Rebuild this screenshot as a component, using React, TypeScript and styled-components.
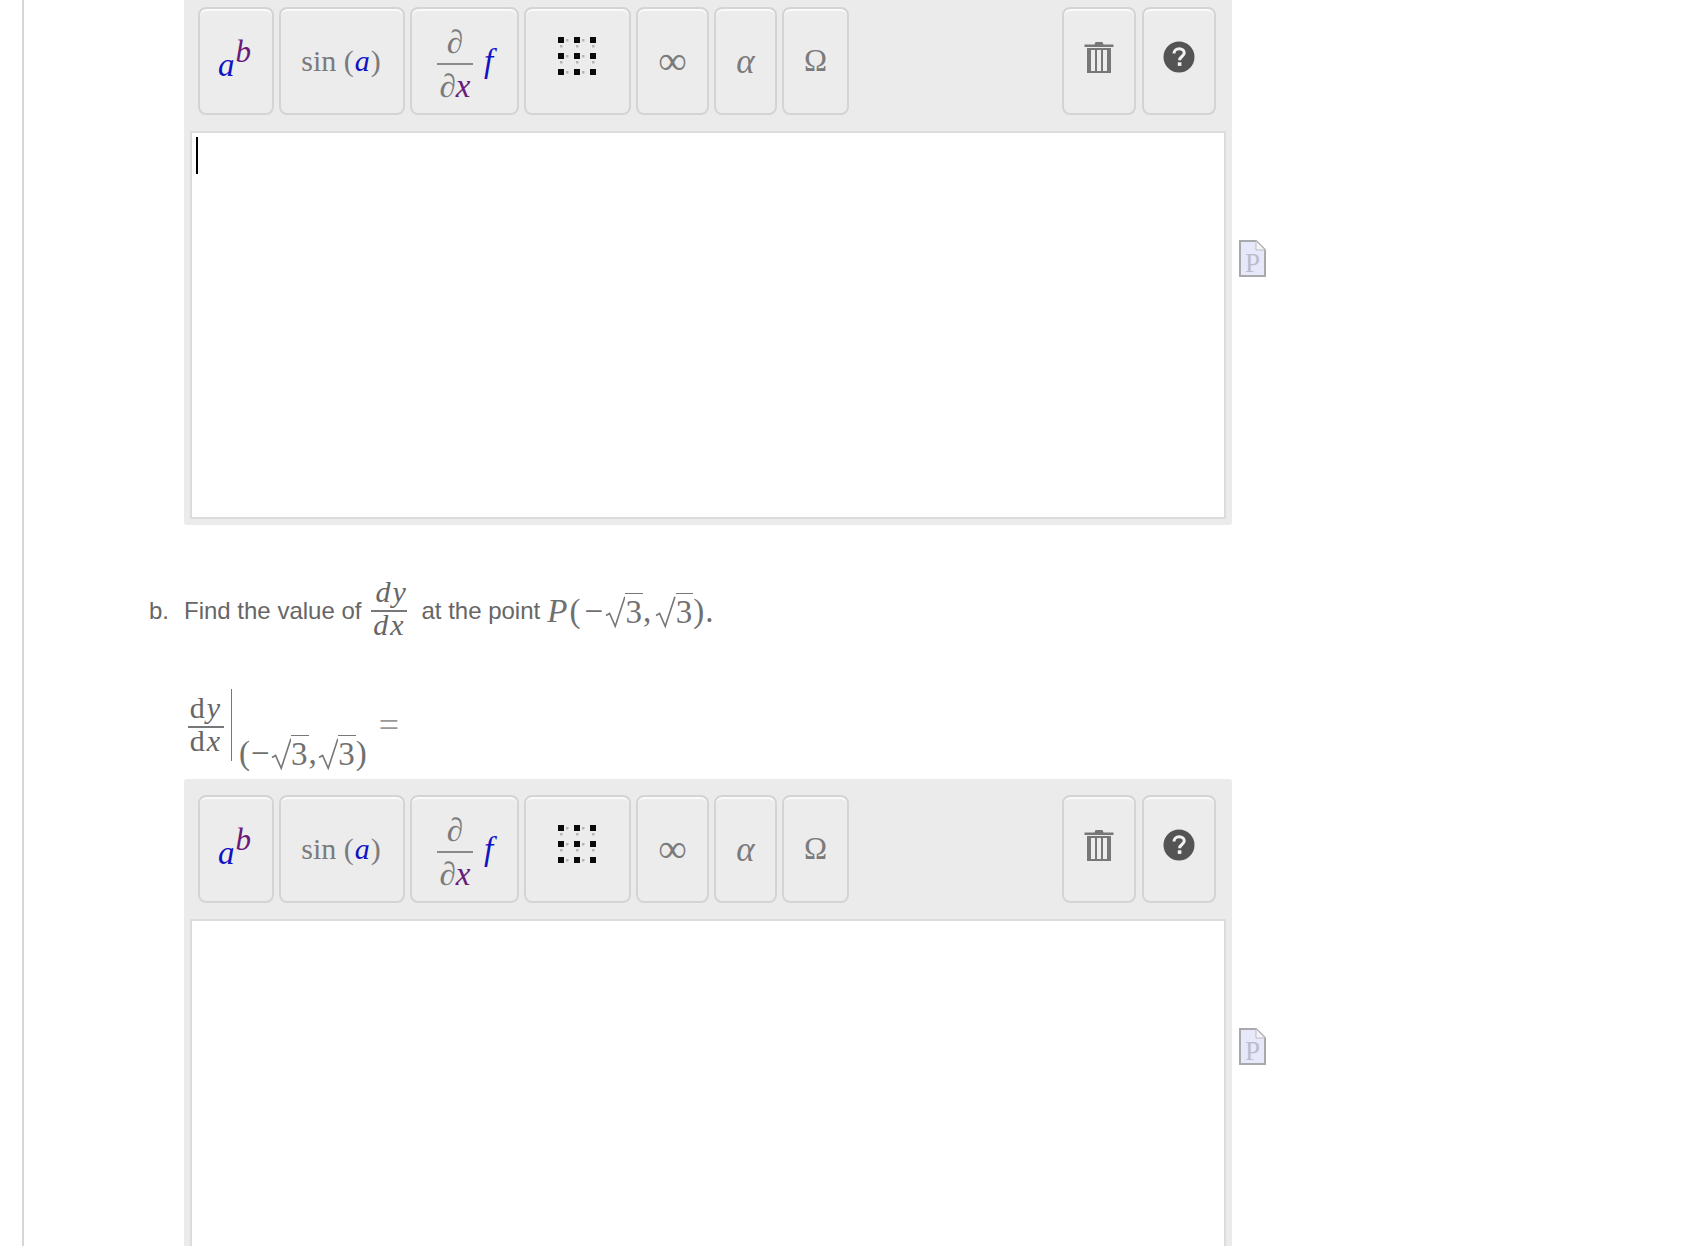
import React from "react";
import styled, { createGlobalStyle } from "styled-components";

const BLUE = "#1212c4";
const PURPLE = "#691a78";
const GREY = "#7b7b7b";
const TEXT = "#666666";
const MATH = '"Liberation Serif", "Times New Roman", serif';

const GlobalStyle = createGlobalStyle`
	html, body {
		margin: 0;
		padding: 0;
		background: #fff;
		overflow: hidden;
	}
	body {
		font-family: "Liberation Sans", Arial, sans-serif;
		color: ${TEXT};
	}
`;

const Sheet = styled.div`
	height: 1246px;
	margin-left: 22px;
	border-left: 2px solid #d6d6d6;
	overflow: hidden;
`;

const Content = styled.div`
	margin-top: -9px;
	padding-left: 160px;
	display: flex;
	flex-direction: column;
`;

const EditorRow = styled.div`
	display: flex;
	align-items: center;
	gap: 7px;
`;

const Panel = styled.div`
	width: 1048px;
	box-sizing: border-box;
	background: #ebebeb;
	border-radius: 3px;
	padding: 16px 6px 6px 6px;
	flex-shrink: 0;
`;

const Toolbar = styled.div`
	display: flex;
	gap: 5px;
	padding: 0 10px 0 8px;
	margin-bottom: 16px;
`;

const ToolGroup = styled.div`
	display: flex;
	gap: 6px;
	margin-left: auto;
`;

const ToolButton = styled.div<{ $w: number }>`
	width: ${(p) => p.$w}px;
	height: 108px;
	box-sizing: border-box;
	border: 2px solid #d4d4d4;
	border-radius: 8px;
	background: #ececec;
	box-shadow: inset 0 2px 0 #fafafa;
	display: flex;
	align-items: center;
	justify-content: center;
	font-family: ${MATH};
	color: ${GREY};
	position: relative;
`;

const Glyph = styled.span<{ $size?: number; $color?: string; $italic?: boolean }>`
	font-size: ${(p) => p.$size || 28}px;
	color: ${(p) => p.$color || GREY};
	font-style: ${(p) => (p.$italic ? "italic" : "normal")};
	line-height: 1;
`;

const Power = styled.span`
	display: flex;
	align-items: flex-start;
	margin-right: 3px;
	margin-top: -6px;
`;

const PowerBase = styled(Glyph)`
	margin-top: 14px;
`;

const PowerExp = styled(Glyph)`
	margin: 1px 0 0 1px;
`;

const SinLabel = styled.span`
	display: flex;
	align-items: center;
	gap: 1px;
	white-space: pre;
	margin-right: 2px;
`;

const DerivWrap = styled.span`
	display: flex;
	align-items: center;
	gap: 11px;
	margin-left: 1px;
`;

const ToolFrac = styled.span`
	display: flex;
	flex-direction: column;
	align-items: center;
	width: 36px;
	margin-top: 6px;
`;

const ToolFracTop = styled.span`
	height: 42px;
	display: flex;
	align-items: center;
	border-bottom: 2px solid #8a8a8a;
	width: 100%;
	justify-content: center;
`;

const ToolFracBottom = styled.span`
	height: 42px;
	display: flex;
	align-items: center;
	white-space: pre;
`;

const IconSlot = styled.span<{ $shift?: number; $lift?: number }>`
	display: flex;
	margin-bottom: ${(p) => p.$lift || 8}px;
	margin-right: ${(p) => p.$shift || 0}px;
`;

const OmegaGlyph = styled(Glyph)`
	margin-bottom: 2px;
`;

const Editor = styled.div`
	height: 388px;
	box-sizing: border-box;
	background: #fff;
	border: 2px solid #dcdcdc;
	position: relative;
`;

const Caret = styled.div`
	position: absolute;
	left: 4px;
	top: 4px;
	width: 2px;
	height: 37px;
	background: #000;
`;

const QuestionRow = styled.div`
	display: flex;
	align-items: center;
	height: 76px;
	margin: 48px 0 0 -35px;
	font-size: 24px;
	white-space: pre;
`;

const ItemLabel = styled.span`
	width: 35px;
`;

const Fraction = styled.span`
	display: inline-flex;
	flex-direction: column;
	align-items: stretch;
	text-align: center;
	font-family: ${MATH};
	font-size: 30px;
	line-height: 1;
	color: ${TEXT};
`;

const FracTop = styled.span<{ $indent?: number }>`
	padding: 0 0 3px ${(p) => p.$indent || 0}px;
	border-bottom: 2px solid #777;
`;

const FracBottom = styled.span`
	margin-top: -2px;
`;

const InlineFrac = styled(Fraction)`
	width: 36px;
	margin: 0 14px 6px 10px;
	letter-spacing: 2px;
`;

const MathText = styled.span`
	display: inline-flex;
	align-items: center;
	font-family: ${MATH};
	font-size: 33px;
	letter-spacing: 1px;
	margin-left: 7px;
	color: #707070;
`;

const Italic = styled.i`
	margin-right: 1px;
`;

const Minus = styled.span<{ $tight?: boolean }>`
	margin: ${(p) => (p.$tight ? "0" : "0 1px 0 3px")};
`;

const SqrtBox = styled.span`
	display: inline-flex;
	align-items: flex-end;
`;

const Radicand = styled.span`
	border-top: 1px solid #777;
	line-height: 1;
	padding-top: 2px;
`;

const Comma = styled.span`
	margin-right: 3px;
`;

const AnswerRow = styled.div`
	display: flex;
	align-items: flex-start;
	height: 83px;
	margin: 40px 0 7px 4px;
`;

const AnswerFrac = styled(Fraction)`
	width: 36px;
	margin-top: 4px;
	letter-spacing: 2px;
`;

const EvalBar = styled.span`
	width: 1px;
	height: 72px;
	background: #777;
	margin: 0 7px 0 7px;
`;

const EvalPoint = styled.span`
	display: inline-flex;
	align-items: center;
	height: 32px;
	margin-top: 48px;
	font-family: ${MATH};
	font-size: 33px;
	letter-spacing: 1px;
	color: #707070;
`;

const EqualsSign = styled.span`
	font-family: ${MATH};
	font-size: 36px;
	color: #999;
	margin: 18px 0 0 11px;
	line-height: 1;
`;

const DocIcon = styled.svg`
	flex-shrink: 0;
`;

const Surd: React.FC<{ h: number }> = ({ h }) => (
	<svg width={h * 0.62} height={h} viewBox="0 0 20 32">
		<path d="M1 19 L4.5 17 L10 29.5 L19.5 0.5" fill="none" stroke="#777" strokeWidth="1.6" />
	</svg>
);

const Sqrt: React.FC<{ h?: number }> = ({ h = 33 }) => (
	<SqrtBox>
		<Surd h={h} />
		<Radicand>3</Radicand>
	</SqrtBox>
);

const DotGrid = () => (
	<svg width="46" height="46" viewBox="0 0 46 46">
		{[5, 21, 37].map((y) =>
			[5, 21, 37].map((x) => <rect key={`${x}-${y}`} x={x} y={y} width="6" height="6" fill="#0a0a0a" />)
		)}
		{[13, 29].map((x) =>
			[7, 23, 39].map((y) => <rect key={`h${x}-${y}`} x={x} y={y} width="2.5" height="2.5" fill="#b5b5b5" />)
		)}
		{[7, 23, 39].map((x) =>
			[13, 29].map((y) => <rect key={`v${x}-${y}`} x={x} y={y} width="2.5" height="2.5" fill="#b5b5b5" />)
		)}
	</svg>
);

const TrashIcon = () => (
	<svg width="30" height="32" viewBox="0 0 30 32">
		<path d="M0.5 3.5 H10.5 L11.5 1 H18.5 L19.5 3.5 H29.5 V6 H0.5 Z" fill="#777" />
		<path
			fillRule="evenodd"
			d="M3 7 H27 V32 H3 Z M7 9 V30 H11 V9 Z M13 9 V30 H17 V9 Z M19 9 V30 H23 V9 Z"
			fill="#777"
		/>
	</svg>
);

const HelpIcon = () => (
	<svg width="32" height="32" viewBox="0 0 32 32">
		<circle cx="16" cy="16" r="15.5" fill="#545454" />
		<path
			d="M11 12.5 C11 9.5 13.2 7.8 16.2 7.8 C19.2 7.8 21.2 9.6 21.2 12 C21.2 15.5 16.6 15.6 16.6 19.2"
			fill="none"
			stroke="#f2f2f2"
			strokeWidth="3"
		/>
		<rect x="14.8" y="21.3" width="3.6" height="3.6" fill="#f2f2f2" />
	</svg>
);

const PdfIcon = () => (
	<DocIcon width="27" height="37" viewBox="0 0 27 37">
		<path d="M1 1 H17 L26 10 V36 H1 Z" fill="#e8e8fb" stroke="#a9a9ad" strokeWidth="2" />
		<path d="M17 1 V10 H26 Z" fill="#f4f4f8" stroke="#bdbdc2" strokeWidth="1" />
		<text x="6" y="32" fontFamily={MATH} fontSize="27" fill="#bcbccb">
			P
		</text>
	</DocIcon>
);

const MathToolbar = () => (
	<Toolbar>
		<ToolButton $w={76}>
			<Power>
				<PowerBase $italic $color={BLUE} $size={33}>a</PowerBase>
				<PowerExp $italic $color={PURPLE} $size={31}>b</PowerExp>
			</Power>
		</ToolButton>
		<ToolButton $w={126}>
			<SinLabel>
				<Glyph $size={30}>sin (</Glyph>
				<Glyph $italic $color={BLUE} $size={30}>a</Glyph>
				<Glyph $size={30}>)</Glyph>
			</SinLabel>
		</ToolButton>
		<ToolButton $w={109}>
			<DerivWrap>
				<ToolFrac>
					<ToolFracTop>
						<Glyph $size={33}>∂</Glyph>
					</ToolFracTop>
					<ToolFracBottom>
						<Glyph $size={33}>∂</Glyph>
						<Glyph $italic $color={PURPLE} $size={33}>x</Glyph>
					</ToolFracBottom>
				</ToolFrac>
				<Glyph $italic $color={BLUE} $size={33}>f</Glyph>
			</DerivWrap>
		</ToolButton>
		<ToolButton $w={107}>
			<IconSlot $shift={3} $lift={12}>
				<DotGrid />
			</IconSlot>
		</ToolButton>
		<ToolButton $w={73}>
			<Glyph $size={40}>∞</Glyph>
		</ToolButton>
		<ToolButton $w={63}>
			<Glyph $italic $size={35}>α</Glyph>
		</ToolButton>
		<ToolButton $w={67}>
			<OmegaGlyph $size={31}>Ω</OmegaGlyph>
		</ToolButton>
		<ToolGroup>
			<ToolButton $w={74}>
				<IconSlot>
					<TrashIcon />
				</IconSlot>
			</ToolButton>
			<ToolButton $w={74}>
				<IconSlot>
					<HelpIcon />
				</IconSlot>
			</ToolButton>
		</ToolGroup>
	</Toolbar>
);

const EditorBlock: React.FC<{ focused?: boolean }> = ({ focused }) => (
	<EditorRow>
		<Panel>
			<MathToolbar />
			<Editor>{focused && <Caret />}</Editor>
		</Panel>
		<PdfIcon />
	</EditorRow>
);

const App: React.FC = () => (
	<>
		<GlobalStyle />
		<Sheet>
			<Content>
				<EditorBlock focused />
				<QuestionRow>
					<ItemLabel>b.</ItemLabel>
					<span>Find the value of</span>
					<InlineFrac>
						<FracTop $indent={4}>
							<i>dy</i>
						</FracTop>
						<FracBottom>
							<i>dx</i>
						</FracBottom>
					</InlineFrac>
					<span>at the point</span>
					<MathText>
						<Italic>P</Italic>(<Minus>−</Minus>
						<Sqrt />
						<Comma>,</Comma>
						<Sqrt />
						).
					</MathText>
				</QuestionRow>
				<AnswerRow>
					<AnswerFrac>
						<FracTop>
							d<i>y</i>
						</FracTop>
						<FracBottom>
							d<i>x</i>
						</FracBottom>
					</AnswerFrac>
					<EvalBar />
					<EvalPoint>
						(<Minus $tight>−</Minus>
						<Sqrt />,<Sqrt />)
					</EvalPoint>
					<EqualsSign>=</EqualsSign>
				</AnswerRow>
				<EditorBlock />
			</Content>
		</Sheet>
	</>
);

export default App;
